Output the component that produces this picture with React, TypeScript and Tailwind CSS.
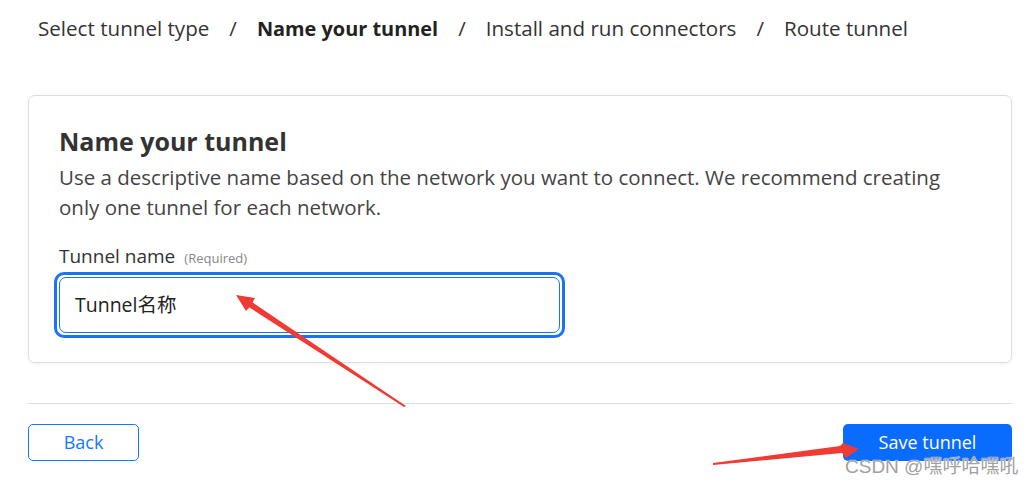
export default function App() {
  return (
    <div className="relative h-[487px] w-[1034px] overflow-hidden bg-white text-[#333] font-['Open_Sans','Noto_Sans_CJK_SC',sans-serif]">
      <div className="flex flex-col px-[28px]">
        {/* breadcrumb */}
        <div className="flex h-[57px] items-center gap-[20px] pl-[10px] text-[20.6px]">
          <span>Select tunnel type</span>
          <span>/</span>
          <span className="text-[19.9px] font-bold text-[#222]">Name your tunnel</span>
          <span>/</span>
          <span>Install and run connectors</span>
          <span>/</span>
          <span>Route tunnel</span>
        </div>

        {/* card */}
        <div className="mt-[38px] w-[984px] rounded-[7px] border border-[#dedede] pl-[30px] pr-[32px] pt-[27px] pb-[24px] shadow-[0_1px_4px_rgba(0,0,0,0.06)]">
          <h1 className="text-[25px] font-bold leading-[36px] text-[#333]">Name your tunnel</h1>
          <p className="mt-[3px] text-[20.5px] leading-[30px] text-[#444]">
            Use a descriptive name based on the network you want to connect. We recommend creating
            <br />
            only one tunnel for each network.
          </p>
          <div className="mt-[25px] flex h-[22px] items-baseline gap-[9px]">
            <span className="text-[19px] leading-none text-[#333]">Tunnel name</span>
            <span className="text-[13px] leading-none text-[#888]">(Required)</span>
          </div>
          <div className="-ml-[5px] mt-[3px] w-[511px] rounded-[10px] border-[3px] border-[#1a73f5] p-[2px]">
            <div className="flex h-[56px] items-center rounded-[7px] border border-[#1a73f5] px-[15px] text-[19.5px] text-[#222]">
              Tunnel名称
            </div>
          </div>
        </div>

        {/* divider */}
        <div className="mt-[40px] h-px w-[984px] bg-[#dcdcdc]" />

        {/* actions */}
        <div className="mt-[20px] flex w-[984px] items-center justify-between">
          <button className="h-[37px] w-[111px] rounded-[5px] border border-[#1677ff] text-[18px] text-[#1677ff]">
            Back
          </button>
          <button className="h-[37px] w-[169px] rounded-[5px] bg-[#0a6cff] text-[18px] text-white">
            Save tunnel
          </button>
        </div>
      </div>

      {/* annotation arrows */}
      <svg className="pointer-events-none absolute left-0 top-0" width="1034" height="487">
        <polygon points="406,406 252.6,302.5 255,298 236,295 246,311 249.4,307.5 404,407" fill="#f03a34" />
        <polygon points="713,463 840,446 843,443 859,449 846,458 842,453 713,465" fill="#f03a34" />
      </svg>

      {/* watermark */}
      <div className="pointer-events-none absolute left-[845px] top-[454px] text-[19px] leading-[26px] text-[#a0a0a0] font-['Liberation_Sans','Noto_Sans_CJK_SC',sans-serif] [text-shadow:0_0_1px_#fff,0_0_1px_#fff]">
        CSDN @嘿呼哈嘿吼
      </div>
    </div>
  )
}
